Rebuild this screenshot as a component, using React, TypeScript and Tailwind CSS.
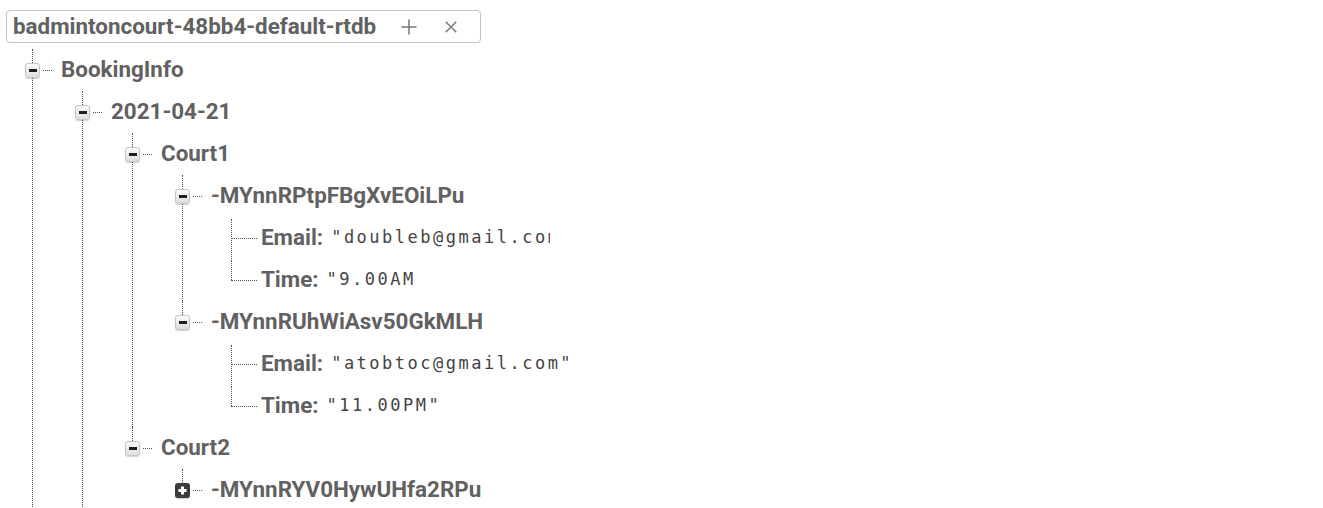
import type { ReactNode } from "react";

const labelFont = { fontFamily: "Roboto, 'Liberation Sans', sans-serif" };
const monoFont = { fontFamily: "'DejaVu Sans Mono', 'Liberation Mono', monospace" };

function Toggle({ open }: { open: boolean }) {
  if (open) {
    return (
      <span className="relative z-10 flex h-[15px] w-[15px] shrink-0 items-center justify-center rounded-[3px] border border-[#c6c6c6] bg-linear-to-b from-[#fbfbfb] to-[#dedede] shadow-[0_1px_1px_rgba(0,0,0,0.18)]">
        <span className="h-[3px] w-[8px] bg-[#1f1f1f]" />
      </span>
    );
  }
  return (
    <span className="relative z-10 flex h-[15px] w-[15px] shrink-0 items-center justify-center rounded-[3px] bg-[#3c3c3c] shadow-[0_1px_1px_rgba(0,0,0,0.2)]">
      <svg width="9" height="9" viewBox="0 0 9 9">
        <rect x="3" y="0.5" width="3" height="8" fill="#fff" />
        <rect x="0.5" y="3" width="8" height="3" fill="#fff" />
      </svg>
    </span>
  );
}

function Node({
  label,
  open = true,
  full = false,
  children,
}: {
  label: string;
  open?: boolean;
  full?: boolean;
  children?: ReactNode;
}) {
  return (
    <div className="relative">
      {/* connector to parent / next sibling */}
      <span
        className={
          full
            ? "absolute left-[7px] top-0 bottom-0 border-l border-dotted border-[#555]"
            : "absolute left-[7px] top-0 h-[14px] border-l border-dotted border-[#555]"
        }
      />
      <div className="flex h-[42px] items-center">
        <Toggle open={open} />
        <span className="ml-[3px] w-[9px] border-t border-dotted border-[#555]" />
        <span className="ml-[9px] text-[22.4px] font-bold text-[#616161]" style={labelFont}>
          {label}
        </span>
      </div>
      {children && <div className="pl-[50px]">{children}</div>}
    </div>
  );
}

function Leaf({
  k,
  v,
  last = false,
  clip = false,
}: {
  k: string;
  v: string;
  last?: boolean;
  clip?: boolean;
}) {
  return (
    <div className="relative flex h-[42px] items-center">
      <span
        className={
          last
            ? "absolute left-[6px] top-[2px] h-[19px] border-l border-dotted border-[#555]"
            : "absolute left-[6px] top-[2px] bottom-[-2px] border-l border-dotted border-[#555]"
        }
      />
      <span className="ml-[6px] w-[26px] border-t border-dotted border-[#555]" />
      <span className="ml-[4px] text-[22.4px] font-bold text-[#616161]" style={labelFont}>
        {k}:
      </span>
      <span
        className={
          "ml-[8px] whitespace-nowrap text-[17px] tracking-[2.5px] text-[#444]" +
          (clip ? " w-[219px] overflow-hidden" : "")
        }
        style={monoFont}
      >
        {v}
      </span>
    </div>
  );
}

export default function App() {
  return (
    <div className="h-[508px] w-[1323px] overflow-hidden bg-white">
      {/* DATABASE NAME */}
      <div className="ml-[6px] mt-[10px] flex h-[33px] w-[475px] items-center rounded-[4px] border border-[#c4c4c4] pl-[6px]">
        <span className="text-[22.4px] font-bold text-[#616161]" style={labelFont}>
          badmintoncourt-48bb4-default-rtdb
        </span>
        <svg className="ml-[25px]" width="16" height="16" viewBox="0 0 16 16">
          <path d="M8 0.5v15M0.5 8h15" stroke="#757575" strokeWidth="1.5" />
        </svg>
        <svg className="ml-[28px]" width="12" height="12" viewBox="0 0 12 12">
          <path d="M0.7 0.7l10.6 10.6M11.3 0.7L0.7 11.3" stroke="#757575" strokeWidth="1.4" />
        </svg>
      </div>

      {/* TREE */}
      <div className="mt-[6px] pl-[25px]">
        <Node label="BookingInfo" full>
          <Node label="2021-04-21" full>
            <Node label="Court1" full>
              <Node label="-MYnnRPtpFBgXvEOiLPu" full>
                <Leaf k="Email" v={'"doubleb@gmail.com'} clip />
                <Leaf k="Time" v={'"9.00AM'} last />
              </Node>
              <Node label="-MYnnRUhWiAsv50GkMLH">
                <Leaf k="Email" v={'"atobtoc@gmail.com"'} />
                <Leaf k="Time" v={'"11.00PM"'} last />
              </Node>
            </Node>
            <Node label="Court2">
              <Node label="-MYnnRYV0HywUHfa2RPu" open={false} />
            </Node>
          </Node>
        </Node>
      </div>
    </div>
  );
}
